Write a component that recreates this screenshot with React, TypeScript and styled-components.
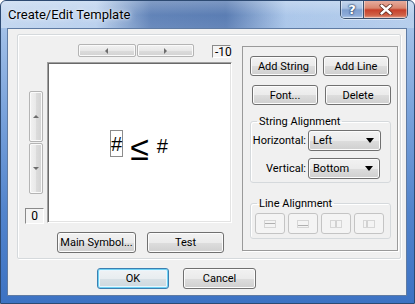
import React from "react";
import styled, { createGlobalStyle, css } from "styled-components";

const GlobalStyle = createGlobalStyle`
  html, body { margin: 0; padding: 0; background: #ffffff; }
  body { font-family: Roboto, "Liberation Sans", sans-serif; font-size: 11px; color: #000; }
  * { box-sizing: border-box; }
`;

const Window = styled.div`
  width: 415px;
  height: 304px;
  display: flex;
  flex-direction: column;
  padding: 0 7px 7px 6px;
  border: 1px solid #2d4a72;
  border-radius: 6px 6px 0 0;
  background: linear-gradient(to bottom, #b4cdec 0px, #9cbce6 40px, #76a0da 120px, #5284cc 210px, #3c72c3 304px);
  overflow: hidden;
`;

const TitleBar = styled.div`
  height: 27px;
  flex: none;
  display: flex;
  align-items: flex-start;
  margin: 0 -7px 0 -6px;
  padding: 0 6px 0 7px;
  background: linear-gradient(
      to bottom,
      rgba(255, 255, 255, 0.18) 0px,
      rgba(255, 255, 255, 0) 14px,
      rgba(255, 255, 255, 0.08) 27px
    ),
    linear-gradient(
      to right,
      rgba(255, 255, 255, 0.3) 0px,
      rgba(255, 255, 255, 0.2) 95px,
      rgba(25, 65, 135, 0.5) 150px,
      rgba(25, 65, 135, 0.55) 225px,
      rgba(255, 255, 255, 0.02) 285px,
      rgba(255, 255, 255, 0.15) 415px
    );
`;

const Title = styled.div`
  flex: 1;
  padding-top: 6px;
  font-size: 13px;
  line-height: 15px;
  color: #000;
  text-shadow: 0 0 6px rgba(255, 255, 255, 0.9), 0 0 2px rgba(255, 255, 255, 0.8);
`;

const CaptionButtons = styled.div`
  display: flex;
  margin-top: -1px;
  border: 1px solid #3b4f6b;
  border-top: none;
  border-radius: 0 0 5px 5px;
  overflow: hidden;
  box-shadow: 0 1px 0 rgba(255, 255, 255, 0.5);
`;

const CaptionButton = styled.div<{ $close?: boolean }>`
  height: 18px;
  width: ${(p) => (p.$close ? 43 : 23)}px;
  display: flex;
  align-items: center;
  justify-content: center;
  box-shadow: inset 0 0 0 1px rgba(255, 255, 255, 0.45);
  ${(p) =>
    p.$close
      ? css`
          background: linear-gradient(to bottom, #e8b1a4 0%, #d9866f 45%, #c7402a 55%, #d06248 85%, #e3a38f 100%);
        `
      : css`
          border-right: 1px solid #3b4f6b;
          background: linear-gradient(to bottom, #c7d8ee 0%, #a9c2e3 45%, #7f9fcf 55%, #8eabd8 85%, #b3cbea 100%);
        `}
`;

const HelpGlyph = styled.span`
  font-family: "DejaVu Sans", sans-serif;
  font-weight: bold;
  font-size: 13px;
  line-height: 13px;
  color: #fff;
  text-shadow: 0 0 1px #29456f, 0 0 2px #29456f, 0 0 2px #29456f;
`;

const Client = styled.div`
  flex: 1;
  display: flex;
  flex-direction: column;
  border: 1px solid #5f7ba3;
  background: #f0f0f0;
`;

const MainGroup = styled.div`
  margin: 5px 0 0 9px;
  width: 384px;
  height: 225px;
  display: flex;
  border: 1px solid #d5d9dc;
  border-radius: 2px;
  box-shadow: inset 1px 1px 0 #ffffff, 1px 1px 0 #ffffff;
`;

const EditorArea = styled.div`
  width: 224px;
  display: grid;
  grid-template-columns: 29px 185px;
  grid-template-rows: 27px 161px auto;
`;

const TopBar = styled.div`
  grid-column: 1 / -1;
  display: flex;
  align-items: flex-start;
  padding: 9px 0 0 60px;
  gap: 18px;
`;

const ScrollGroup = styled.div<{ $vertical?: boolean }>`
  display: flex;
  flex-direction: ${(p) => (p.$vertical ? "column" : "row")};
  gap: 1px;
  ${(p) =>
    p.$vertical
      ? css`
          width: 14px;
          height: 103px;
          margin: 29px 0 0 11px;
        `
      : css`
          width: 116px;
          height: 13px;
        `}
`;

const ScrollButton = styled.div<{ $vertical?: boolean }>`
  flex: 1;
  display: flex;
  align-items: center;
  justify-content: center;
  border: 1px solid #b4b4b4;
  border-radius: 2px;
  box-shadow: inset 0 0 0 1px #fafafa;
  background: ${(p) =>
    p.$vertical
      ? "linear-gradient(to right, #f2f2f2 0%, #e8e8e8 50%, #dcdcdc 51%, #d2d2d2 100%)"
      : "linear-gradient(to bottom, #f2f2f2 0%, #e8e8e8 50%, #dcdcdc 51%, #d2d2d2 100%)"};
`;

const ValueBox = styled.div<{ $w: number; $h: number }>`
  width: ${(p) => p.$w}px;
  height: ${(p) => p.$h}px;
  border: 1px solid;
  border-color: #8a8a8a #ffffff #ffffff #8a8a8a;
  background: #f4f4f4;
  font-size: 12px;
  line-height: 13px;
  padding-left: 2px;
`;

const TopValue = styled(ValueBox)`
  margin-top: 1px;
`;

const LeftRail = styled.div`
  display: flex;
  flex-direction: column;
`;

const ZeroBox = styled(ValueBox)`
  margin: auto 0 -1px 7px;
  text-align: center;
  padding: 1px 0 0 0;
`;

const Canvas = styled.div`
  background: #ffffff;
  border: 1px solid;
  border-color: #a0a0a0 #ffffff #ffffff #a0a0a0;
  box-shadow: inset 1px 1px 0 #696969, inset -1px -1px 0 #e3e3e3;
  display: flex;
  align-items: center;
  justify-content: center;
  padding-top: 7px;
`;

const Equation = styled.div`
  display: flex;
  align-items: flex-start;
  gap: 7px;
  font-family: "Liberation Sans", Arial, sans-serif;
`;

const HashBox = styled.div<{ $boxed?: boolean }>`
  width: 13px;
  display: flex;
  align-items: center;
  justify-content: center;
  font-size: 20px;
  line-height: 20px;
  ${(p) =>
    p.$boxed
      ? css`
          height: 27px;
          border: 1px solid #8c8c8c;
        `
      : css`
          height: 20px;
          margin-top: 6px;
        `}
`;

const Relation = styled.div`
  font-size: 34px;
  line-height: 27px;
  height: 27px;
  margin-top: 5px;
  display: flex;
  align-items: center;
`;

const BottomRow = styled.div`
  grid-column: 1 / -1;
  display: flex;
  gap: 11px;
  padding: 9px 0 0 39px;
`;

const Button = styled.button<{ $w: number; $default?: boolean; $h?: number }>`
  width: ${(p) => p.$w}px;
  height: ${(p) => p.$h ?? 21}px;
  padding: 0;
  font-family: Roboto, "Liberation Sans", sans-serif;
  font-size: 11px;
  color: #000;
  border: 1px solid #707070;
  border-radius: 3px;
  box-shadow: inset 0 0 0 1px #fcfcfc;
  background: linear-gradient(to bottom, #f2f2f2 0%, #ebebeb 50%, #dddddd 51%, #cfcfcf 100%);
  ${(p) =>
    p.$default &&
    css`
      border-color: #3c7fb1;
      box-shadow: inset 0 0 0 1px #6fd2f4, inset 0 0 0 2px #e8f6fd;
      background: linear-gradient(to bottom, #f0f3f5 0%, #e8edf0 50%, #d8e1e6 51%, #cdd8de 100%);
    `}
`;

const SidePanel = styled.div`
  margin-top: 11px;
  width: 156px;
  height: 205px;
  border: 1px solid #9a9a9a;
  box-shadow: 1px 1px 0 #ffffff;
  display: flex;
  flex-direction: column;
`;

const PanelRow = styled.div<{ $indent: number; $gap: number }>`
  display: flex;
  margin-top: 9px;
  padding-left: ${(p) => p.$indent}px;
  gap: ${(p) => p.$gap}px;
`;

const GroupBox = styled.fieldset<{ $top: number }>`
  margin: ${(p) => p.$top}px 0 0 7px;
  width: 141px;
  padding: 0;
  border: 1px solid #d5d9dc;
  border-radius: 3px;
  box-shadow: inset 1px 1px 0 #ffffff;
  min-inline-size: 0;
`;

const Legend = styled.legend`
  margin-left: 6px;
  padding: 0 2px;
  font-size: 11px;
  line-height: 13px;
`;

const FieldRows = styled.div`
  display: flex;
  flex-direction: column;
  gap: 7px;
  padding: 2px 0 3px 0;
`;

const FieldRow = styled.div`
  display: flex;
  align-items: center;
  gap: 2px;
`;

const FieldLabel = styled.span`
  width: 55px;
  text-align: right;
  font-size: 11px;
`;

const Select = styled.div<{ $w: number }>`
  width: ${(p) => p.$w}px;
  height: 21px;
  display: flex;
  align-items: center;
  justify-content: space-between;
  padding: 0 6px 0 4px;
  font-size: 11px;
  border: 1px solid #707070;
  border-radius: 3px;
  box-shadow: inset 0 0 0 1px #fcfcfc;
  background: linear-gradient(to bottom, #f2f2f2 0%, #ebebeb 50%, #dddddd 51%, #cfcfcf 100%);
`;

const AlignButtons = styled.div`
  display: flex;
  gap: 3px;
  padding: 3px 0 4px 4px;
`;

const AlignButton = styled.div`
  width: 30px;
  height: 21px;
  display: flex;
  align-items: center;
  justify-content: center;
  border: 1px solid #c4c4c4;
  border-radius: 3px;
  background: #f4f4f4;
`;

const Footer = styled.div`
  display: flex;
  gap: 14px;
  margin-top: 9px;
  padding-left: 89px;
`;

const Arrow = ({ dir }: { dir: "left" | "right" | "up" | "down" }) => {
  const pts: Record<string, string> = {
    left: "3,0 3,6 0,3",
    right: "0,0 0,6 3,3",
    up: "0,3 6,3 3,0",
    down: "0,0 6,0 3,3",
  };
  const horizontal = dir === "left" || dir === "right";
  return (
    <svg width={horizontal ? 3 : 6} height={horizontal ? 6 : 3} viewBox={horizontal ? "0 0 3 6" : "0 0 6 3"}>
      <polygon points={pts[dir]} fill="#6d6d6d" />
    </svg>
  );
};

const DropArrow = () => (
  <svg width="8" height="5" viewBox="0 0 8 5">
    <polygon points="0,0 8,0 4,5" fill="#000" />
  </svg>
);

const CloseGlyph = () => (
  <svg width="14" height="11" viewBox="0 0 14 11">
    <path d="M2.5 1.5 L11.5 9.5 M11.5 1.5 L2.5 9.5" stroke="#5a2418" strokeWidth="4" strokeLinecap="round" />
    <path d="M2.5 1.5 L11.5 9.5 M11.5 1.5 L2.5 9.5" stroke="#ffffff" strokeWidth="2.4" strokeLinecap="round" />
  </svg>
);

const AlignIcon = ({ kind }: { kind: number }) => (
  <svg width="14" height="10" viewBox="0 0 14 10">
    <rect x="1.5" y="1.5" width="11" height="7" fill="none" stroke="#b8b8b8" strokeDasharray="1 1" />
    {kind === 0 && <line x1="2" y1="4.5" x2="12" y2="4.5" stroke="#b0b0b0" />}
    {kind === 1 && <line x1="2" y1="6.5" x2="12" y2="6.5" stroke="#b0b0b0" />}
    {kind === 2 && <line x1="7" y1="2" x2="7" y2="8" stroke="#b0b0b0" />}
    {kind === 3 && <line x1="5" y1="2" x2="5" y2="8" stroke="#b0b0b0" />}
  </svg>
);

export default function App() {
  return (
    <>
      <GlobalStyle />
      <Window>
        <TitleBar>
          <Title>Create/Edit Template</Title>
          <CaptionButtons>
            <CaptionButton>
              <HelpGlyph>?</HelpGlyph>
            </CaptionButton>
            <CaptionButton $close>
              <CloseGlyph />
            </CaptionButton>
          </CaptionButtons>
        </TitleBar>
        <Client>
          <MainGroup>
            <EditorArea>
              <TopBar>
                <ScrollGroup>
                  <ScrollButton>
                    <Arrow dir="left" />
                  </ScrollButton>
                  <ScrollButton>
                    <Arrow dir="right" />
                  </ScrollButton>
                </ScrollGroup>
                <TopValue $w={19} $h={13}>-10</TopValue>
              </TopBar>
              <LeftRail>
                <ScrollGroup $vertical>
                  <ScrollButton $vertical>
                    <Arrow dir="up" />
                  </ScrollButton>
                  <ScrollButton $vertical>
                    <Arrow dir="down" />
                  </ScrollButton>
                </ScrollGroup>
                <ZeroBox $w={19} $h={16}>0</ZeroBox>
              </LeftRail>
              <Canvas>
                <Equation>
                  <HashBox $boxed>#</HashBox>
                  <Relation>≤</Relation>
                  <HashBox>#</HashBox>
                </Equation>
              </Canvas>
              <BottomRow>
                <Button $w={79}>Main Symbol...</Button>
                <Button $w={77}>Test</Button>
              </BottomRow>
            </EditorArea>
            <SidePanel>
              <PanelRow $indent={7} $gap={6}>
                <Button $w={67} $h={20}>Add String</Button>
                <Button $w={66} $h={20}>Add Line</Button>
              </PanelRow>
              <PanelRow $indent={9} $gap={7}>
                <Button $w={66} $h={20}>Font...</Button>
                <Button $w={66} $h={20}>Delete</Button>
              </PanelRow>
              <GroupBox $top={10}>
                <Legend>String Alignment</Legend>
                <FieldRows>
                  <FieldRow>
                    <FieldLabel>Horizontal:</FieldLabel>
                    <Select $w={73}>
                      Left
                      <DropArrow />
                    </Select>
                  </FieldRow>
                  <FieldRow>
                    <FieldLabel>Vertical:</FieldLabel>
                    <Select $w={72}>
                      Bottom
                      <DropArrow />
                    </Select>
                  </FieldRow>
                </FieldRows>
              </GroupBox>
              <GroupBox $top={14}>
                <Legend>Line Alignment</Legend>
                <AlignButtons>
                  {[0, 1, 2, 3].map((k) => (
                    <AlignButton key={k}>
                      <AlignIcon kind={k} />
                    </AlignButton>
                  ))}
                </AlignButtons>
              </GroupBox>
            </SidePanel>
          </MainGroup>
          <Footer>
            <Button $w={72} $default>
              OK
            </Button>
            <Button $w={73}>Cancel</Button>
          </Footer>
        </Client>
      </Window>
    </>
  );
}
